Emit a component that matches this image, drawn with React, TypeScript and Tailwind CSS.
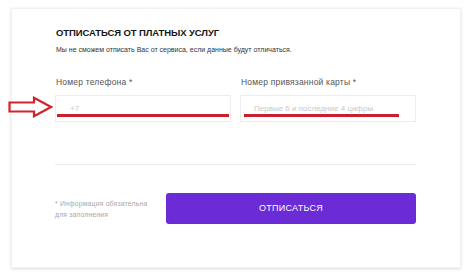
const font = { fontFamily: '"Liberation Sans", Arial, sans-serif' }

function Arrow() {
  return (
    <svg
      className="absolute left-[8px] top-[96px]"
      width="45"
      height="22"
      viewBox="0 0 45 22"
      fill="none"
    >
      <path
        d="M1.5 6.5 H26 V1.8 L43 11 L26 20.2 V15.5 H1.5 Z"
        stroke="#d2232a"
        strokeWidth="2.2"
        strokeLinejoin="miter"
      />
    </svg>
  )
}

function Field({ label, placeholder, pad, line }: { label: string; placeholder: string; pad: string; line: string }) {
  return (
    <div className="flex flex-col gap-[6px]">
      <label className="pl-[1px] text-[8.5px] leading-[11px] text-[#555] tracking-[0.2px]">{label}</label>
      <div className="relative">
        <input
          placeholder={placeholder}
          className={`w-full h-[27px] border border-[#ececec] bg-white text-[8px] outline-none placeholder:text-[#c9c9c9] ${pad}`}
        />
        {/* красная пометка поверх поля */}
        <div className={`absolute top-[20px] h-[2.5px] bg-[#c8202d] ${line}`} />
      </div>
    </div>
  )
}

export default function App() {
  return (
    <div className="relative w-[474px] h-[278px] bg-white overflow-hidden" style={font}>
      <div className="ml-[11px] mt-[8px] w-[450px] h-[260px] bg-white border border-[#f2f2f2] shadow-[0_1px_3px_rgba(0,0,0,0.14)] pl-[44px] pt-[17px]">
        <h1 className="text-[9.5px] leading-[13px] font-bold text-[#151515] tracking-[-0.1px]">
          ОТПИСАТЬСЯ ОТ ПЛАТНЫХ УСЛУГ
        </h1>
        <p className="mt-[6px] text-[7px] leading-[9px] text-[#333]">
          Мы не сможем отписать Вас от сервиса, если данные будут отличаться.
        </p>

        <div className="mt-[23px] grid grid-cols-[176px_176px] gap-x-[9px] w-[361px] -ml-[1px]">
          <Field label="Номер телефона *" placeholder="+7" pad="pl-[14px]" line="left-[2px] w-[172px]" />
          <Field
            label="Номер привязанной карты *"
            placeholder="Первые 6 и последние 4 цифры"
            pad="pl-[13px]"
            line="left-[4px] w-[155px]"
          />
        </div>

        <div className="mt-[42px] w-[361px] -ml-[1px] h-px bg-[#eeeeee]" />

        <div className="mt-[28px] flex items-center w-[361px] -ml-[1px]">
          <div className="w-[111px] text-[6.8px] leading-[11px] text-[#a8a8a8] tracking-[0.2px]">
            <div>* Информация обязательна</div>
            <div>для заполнения</div>
          </div>
          <button className="w-[250px] h-[31px] rounded-[3px] bg-[#6b2bd7] text-white text-[9px] tracking-[0.3px]">
            ОТПИСАТЬСЯ
          </button>
        </div>
      </div>
      <Arrow />
    </div>
  )
}
